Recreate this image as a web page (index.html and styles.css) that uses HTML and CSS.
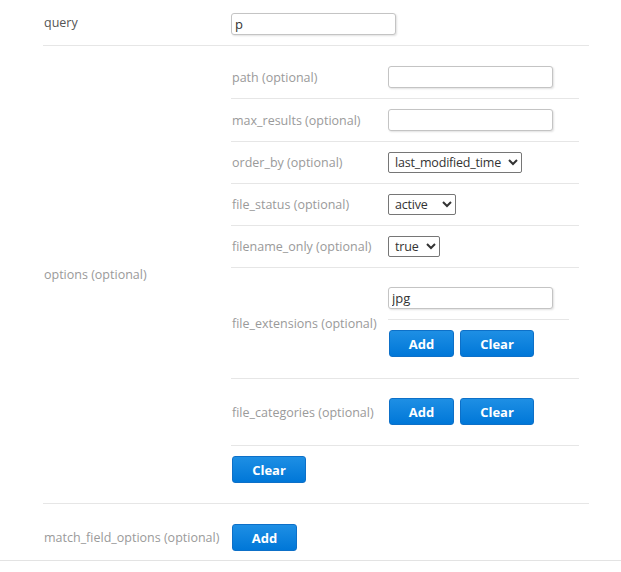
FILE: index.html
```html
<!DOCTYPE html>
<html>
<head>
<meta charset="utf-8">
<link rel="stylesheet" href="styles.css">
</head>
<body>
<div class="panel">
  <div class="form">
    <div class="row">
      <div class="label main">query</div>
      <div class="value first"><input class="text" type="text" value="p"></div>
    </div>
    <div class="row">
      <div class="label">options (optional)</div>
      <div class="value">
        <div class="sub">
          <div class="sub-row">
            <div class="sub-label">path (optional)</div>
            <div class="sub-value"><input class="text" type="text" value=""></div>
          </div>
          <div class="sub-row">
            <div class="sub-label">max_results (optional)</div>
            <div class="sub-value"><input class="text" type="text" value=""></div>
          </div>
          <div class="sub-row">
            <div class="sub-label">order_by (optional)</div>
            <div class="sub-value">
              <select class="sel sel-order">
                <option selected>last_modified_time</option>
                <option>name</option>
                <option>created_time</option>
              </select>
            </div>
          </div>
          <div class="sub-row">
            <div class="sub-label">file_status (optional)</div>
            <div class="sub-value">
              <select class="sel sel-status">
                <option selected>active</option>
                <option>trashed</option>
                <option>all</option>
              </select>
            </div>
          </div>
          <div class="sub-row">
            <div class="sub-label">filename_only (optional)</div>
            <div class="sub-value">
              <select class="sel sel-bool">
                <option selected>true</option>
                <option>false</option>
              </select>
            </div>
          </div>
          <div class="sub-row">
            <div class="sub-label">file_extensions (optional)</div>
            <div class="sub-value">
              <div class="item"><input class="text" type="text" value="jpg"></div>
              <div class="btns">
                <button class="btn btn-add">Add</button><button class="btn btn-clear">Clear</button>
              </div>
            </div>
          </div>
          <div class="sub-row">
            <div class="sub-label">file_categories (optional)</div>
            <div class="sub-value">
              <div class="btns solo">
                <button class="btn btn-add">Add</button><button class="btn btn-clear">Clear</button>
              </div>
            </div>
          </div>
          <div class="sub-row plain">
            <button class="btn btn-clear">Clear</button>
          </div>
        </div>
      </div>
    </div>
    <div class="row last">
      <div class="label">match_field_options (optional)</div>
      <div class="value match"><button class="btn btn-add">Add</button></div>
    </div>
  </div>
</div>
</body>
</html>
```

FILE: styles.css
```css
html, body {
  margin: 0;
  padding: 0;
  background: #ffffff;
}

body {
  font-family: "Open Sans", "Noto Sans", sans-serif;
  font-size: 12.5px;
  color: #999999;
}

.panel {
  border-bottom: 1px solid #e3e3e3;
}

.form {
  margin-left: 43px;
  width: 546px;
}

.row {
  display: flex;
  align-items: center;
  border-bottom: 1px solid #e6e6e6;
}

.row.last {
  border-bottom: none;
  padding-top: 10px;
}

.label {
  width: 188px;
  flex: none;
  padding-left: 1px;
  box-sizing: border-box;
  color: #9a9a9a;
}

.label.main {
  color: #555555;
}

.value {
  flex: 1;
  padding: 10px 10px 10px 0;
  min-width: 0;
}

.value.first {
  padding-top: 13px;
}

.value.match {
  padding: 10px 10px 9px 0;
}

.sub {
  display: flex;
  flex-direction: column;
}

.sub-row {
  display: flex;
  align-items: center;
  border-bottom: 1px solid #e6e6e6;
}

.sub-row.plain {
  border-bottom: none;
  padding: 10px 0;
}

.sub-label {
  width: 157px;
  flex: none;
  padding-left: 1px;
  box-sizing: border-box;
  color: #9a9a9a;
}

.sub-value {
  flex: 1;
  padding: 10px 10px 10px 0;
  min-width: 0;
}

.text {
  display: block;
  box-sizing: border-box;
  width: 165px;
  height: 22px;
  margin: 0;
  padding: 0 5px 0 3px;
  border: 1px solid #c4c4c4;
  border-radius: 3px;
  box-shadow: 1px 1px 2px rgba(0, 0, 0, 0.12);
  font-family: "Open Sans", "Noto Sans", sans-serif;
  font-size: 13px;
  color: #333333;
  background: #ffffff;
  outline: none;
}

.sel {
  display: block;
  box-sizing: border-box;
  height: 21px;
  margin: 0;
  padding: 0 0 0 2px;
  border: 1px solid #767676;
  border-radius: 2px;
  font-family: "Open Sans", "Noto Sans", sans-serif;
  font-size: 12.5px;
  letter-spacing: -0.2px;
  color: #333333;
  background: #ffffff;
}

.sel-order {
  width: 134px;
}

.sel-status {
  width: 68px;
}

.sel-bool {
  width: 52px;
}

.item {
  padding: 9px 0 10px;
  border-bottom: 1px solid #e6e6e6;
}

.btns {
  display: flex;
  gap: 5px;
  padding: 10px 0 11px;
}

.btns.solo {
  padding: 9px 0 10px;
}

.btn {
  display: block;
  box-sizing: border-box;
  height: 27px;
  margin: 0 0 0 1px;
  padding: 0;
  border: 1px solid #0d70c8;
  border-radius: 3px;
  background: linear-gradient(#1e8fe4, #0077d8);
  color: #ffffff;
  font-family: "Open Sans", "Noto Sans", sans-serif;
  font-size: 13px;
  font-weight: bold;
  cursor: pointer;
}

.btn-add {
  width: 65px;
}

.btn-clear {
  width: 74px;
}
```
